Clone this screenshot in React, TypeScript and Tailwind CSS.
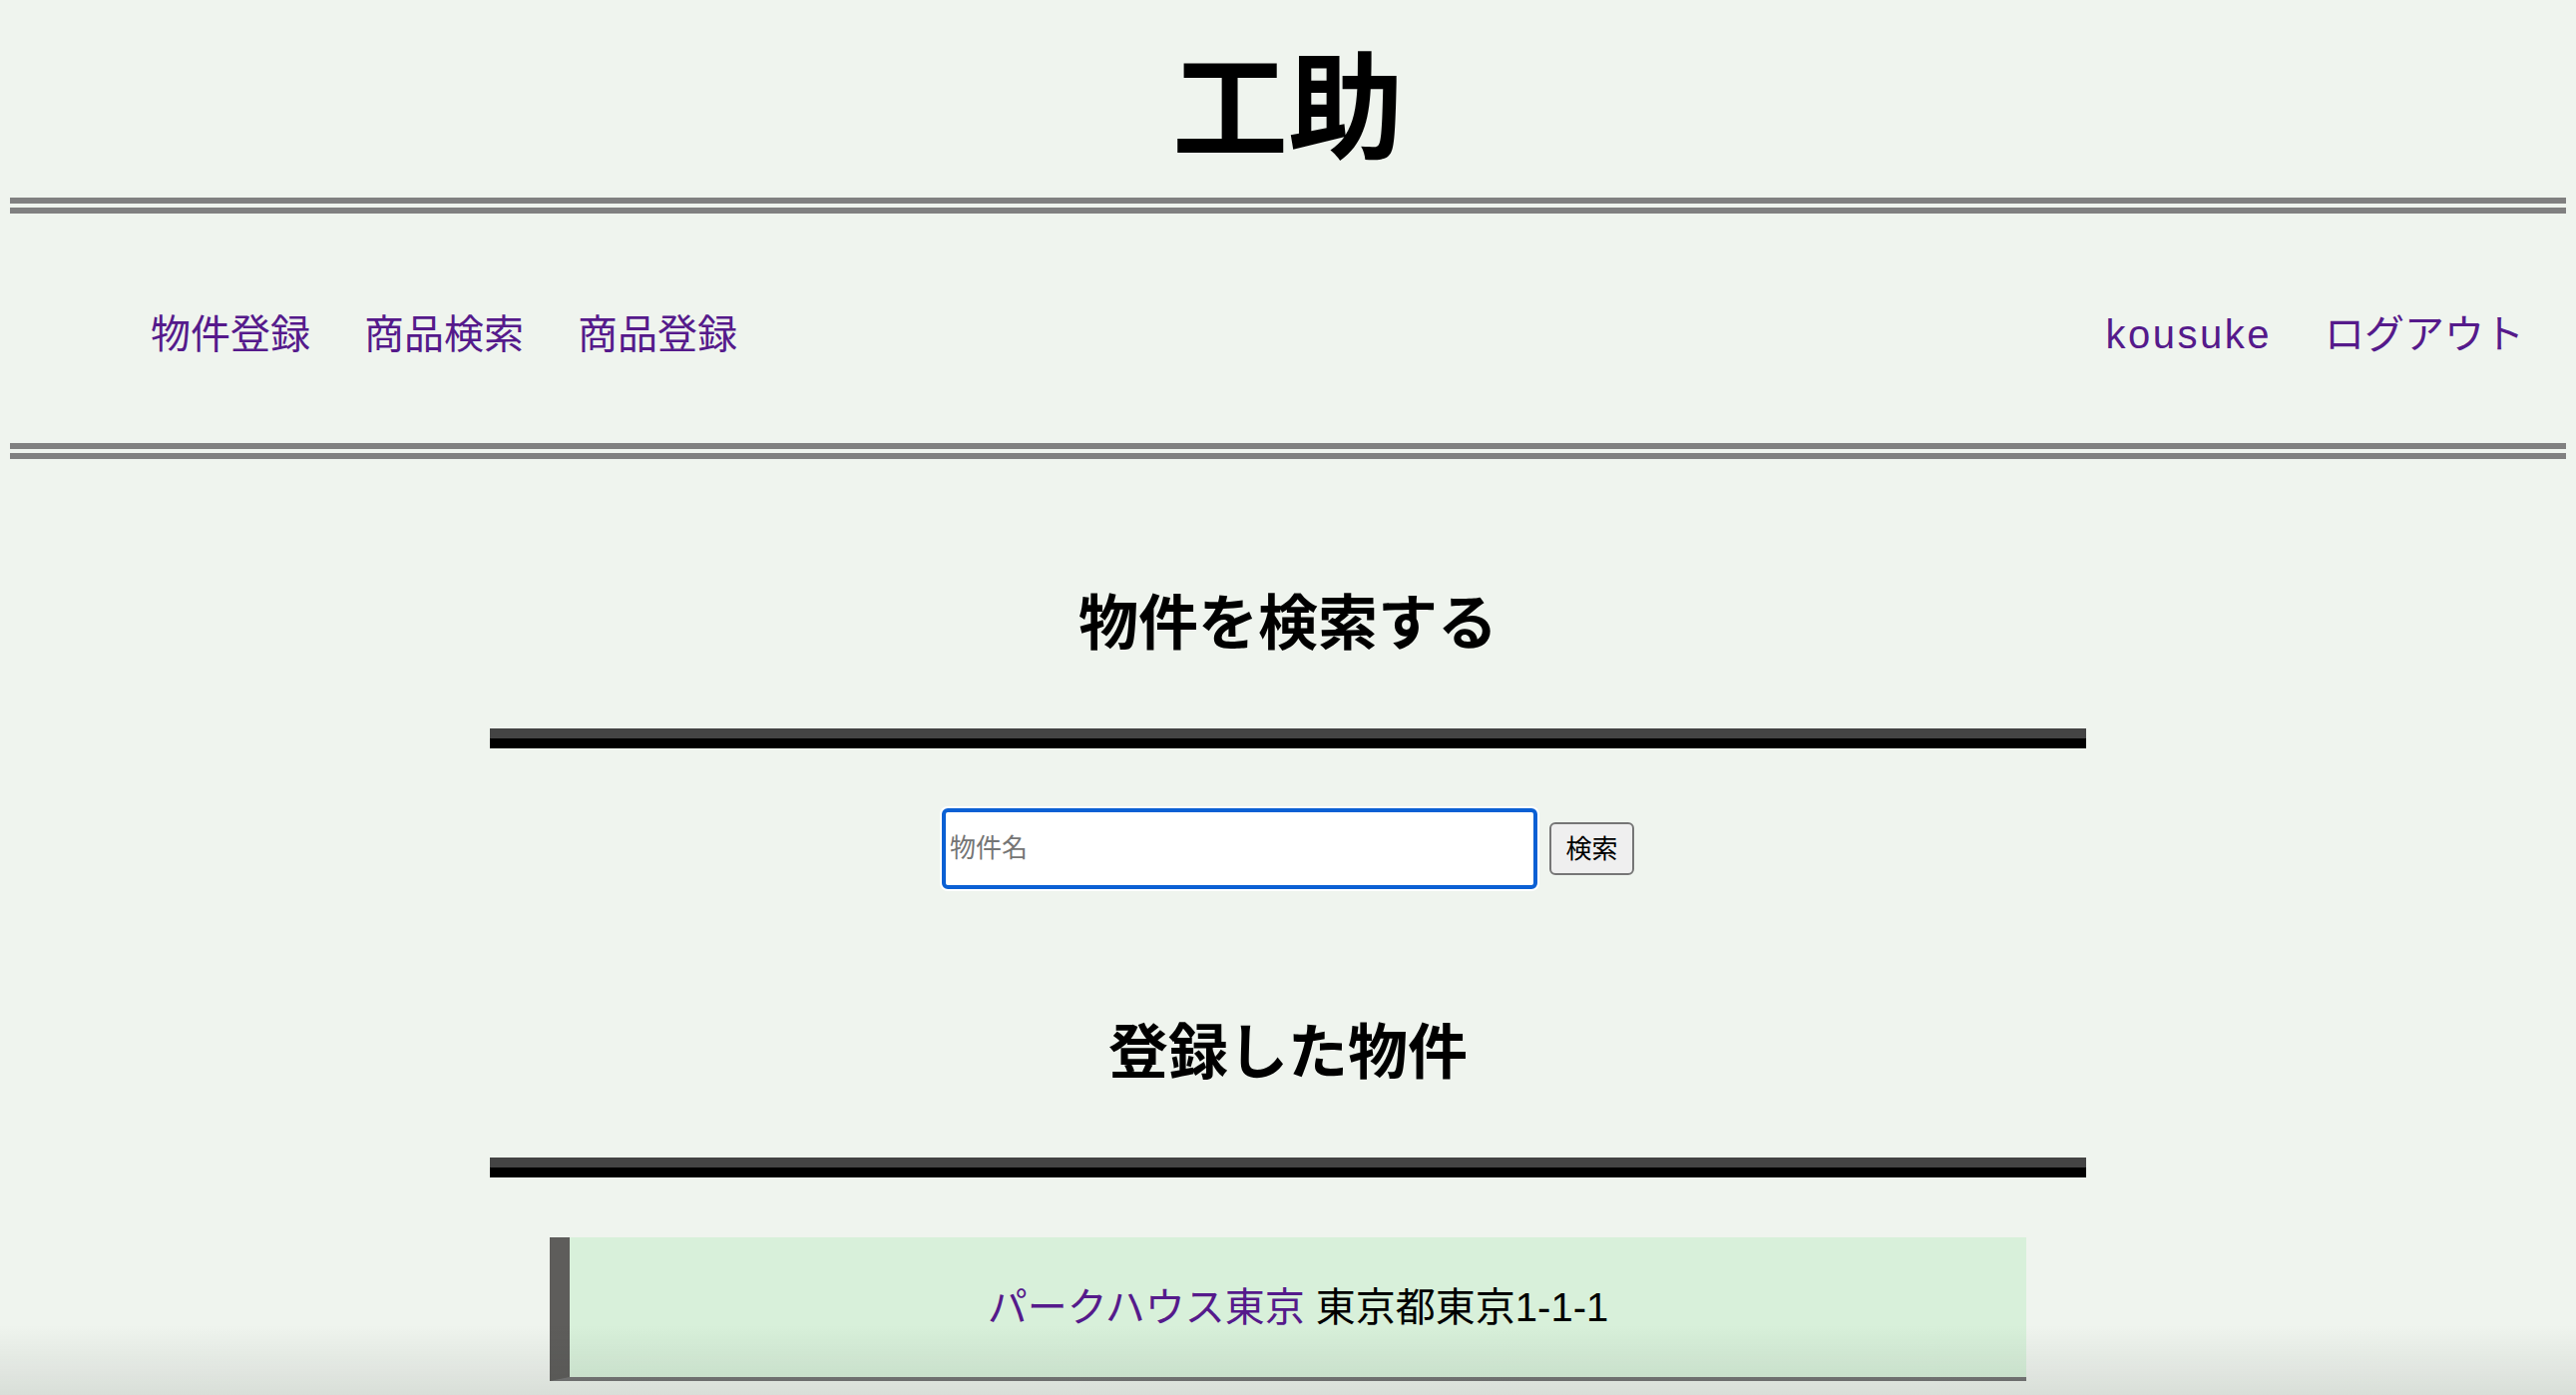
const font = "font-['Liberation_Sans','Noto_Sans_CJK_JP',sans-serif]";

function DoubleRule() {
  return <div className="mx-[10px] h-[16px] border-y-[6px] border-[#808080]" />;
}

function ThickRule() {
  return (
    <div className="mx-auto h-[20px] w-[62%] border-t-[10px] border-b-[10px] border-t-[#444444] border-b-black" />
  );
}

export default function App() {
  const properties = [{ name: "パークハウス東京", address: "東京都東京1-1-1" }];

  return (
    <div className={`relative min-h-screen bg-[#eff4ee] text-black ${font}`}>
      <header className="pt-[52px] pb-[30px]">
        <h1 className="h-[116px] text-center text-[116px] leading-none font-bold">工助</h1>
      </header>
      <DoubleRule />

      <nav className="flex h-[230px] items-center justify-between pt-[12px] pl-[151px] pr-[52px] text-[40px] leading-none text-[#551a8b]">
        <div className="flex gap-[54px]">
          <a href="#">物件登録</a>
          <a href="#">商品検索</a>
          <a href="#">商品登録</a>
        </div>
        <div className="flex gap-[53px]">
          <a href="#" className="tracking-[2.5px]">kousuke</a>
          <a href="#">ログアウト</a>
        </div>
      </nav>
      <DoubleRule />

      <main className="pb-[20px]">
        <h2 className="mt-[136px] h-[60px] text-center text-[60px] leading-none font-bold">
          物件を検索する
        </h2>
        <div className="mt-[74px]">
          <ThickRule />
        </div>

        <form className="mt-[60px] flex items-center justify-center gap-[12px]">
          <input
            type="text"
            placeholder="物件名"
            className="h-[81px] w-[597px] rounded-[6px] border-[4px] border-[#0b60d4] bg-white px-[4px] text-[26px] shadow-[0_0_0_2px_#ffffff] outline-none placeholder:text-[#757575]"
          />
          <button
            type="button"
            className="h-[53px] w-[85px] rounded-[6px] border-2 border-[#767676] bg-[#efefef] text-[26px] leading-none text-black"
          >
            検索
          </button>
        </form>

        <h2 className="mt-[135px] h-[60px] text-center text-[60px] leading-none font-bold">
          登録した物件
        </h2>
        <div className="mt-[74px]">
          <ThickRule />
        </div>

        <div className="mx-auto mt-[60px] w-[62%] px-[60px]">
          {properties.map((p) => (
            <div
              key={p.name}
              className="flex h-[144px] items-center justify-center border-l-[20px] border-b-[4px] border-l-[#5e5d5b] border-b-[#757575] bg-[#d8f0da] text-[40px] leading-none"
            >
              <a href="#" className="text-[#551a8b]">{p.name}</a>
              <span>&nbsp;{p.address}</span>
            </div>
          ))}
        </div>
      </main>

      {/* window shadow along the bottom of the screenshot */}
      <div className="pointer-events-none fixed inset-x-0 bottom-0 h-[70px] bg-gradient-to-b from-transparent to-[rgba(40,50,45,0.11)]" />
    </div>
  );
}
